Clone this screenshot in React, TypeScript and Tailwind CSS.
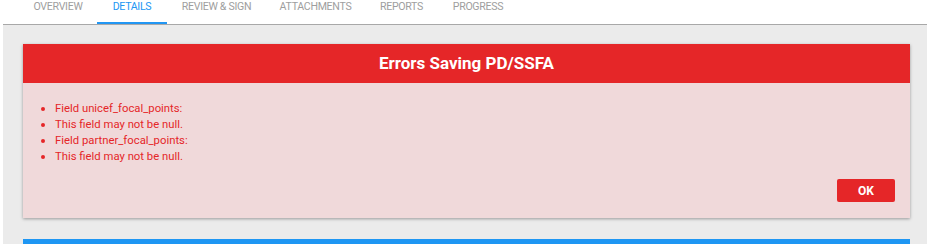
import React from 'react'

const tabs = [
  { label: 'OVERVIEW', w: 'w-[78px]' },
  { label: 'DETAILS', w: 'w-[70px]' },
  { label: 'REVIEW & SIGN', w: 'w-[99px]' },
  { label: 'ATTACHMENTS', w: 'w-[99px]' },
  { label: 'REPORTS', w: 'w-[73px]' },
  { label: 'PROGRESS', w: 'w-[80px]' },
]

const errors = [
  'Field unicef_focal_points:',
  'This field may not be null.',
  'Field partner_focal_points:',
  'This field may not be null.',
]

export default function App() {
  return (
    <div className="flex h-[244px] w-[927px] overflow-hidden bg-white font-['Roboto',sans-serif]">
      <div className="w-[3px] shrink-0 bg-white" />
      <div className="flex flex-1 flex-col bg-[#ebebeb]">
        {/* tabs */}
        <div className="flex h-[25px] shrink-0 border-b border-[#a8a8a8] bg-white pl-[16px]">
          {tabs.map((t) => (
            <div
              key={t.label}
              className={
                'relative -mt-[11px] flex h-[35px] shrink-0 items-center justify-center whitespace-nowrap text-[10.6px] tracking-[-0.3px] ' +
                t.w +
                ' ' +
                (t.label === 'DETAILS' ? 'text-[#2196f3]' : 'text-[#9e9e9e]')
              }
            >
              {t.label}
              {t.label === 'DETAILS' && <div className="absolute bottom-0 left-0 right-0 h-[2px] bg-[#2196f3]" />}
            </div>
          ))}
        </div>

        <div className="flex flex-col gap-[21px] pl-[20px] pr-[17px] pt-[19px]">
          {/* error card */}
          <div className="flex h-[174px] flex-col bg-[#f0d9da] shadow-[0_1px_3px_rgba(0,0,0,0.35)]">
            <div className="flex h-[39px] items-center justify-center bg-[#e52628] text-[17px] font-bold text-white">
              Errors Saving PD/SSFA
            </div>
            <ul className="flex flex-col pl-[18px] pt-[18px]">
              {errors.map((e, i) => (
                <li key={i} className="flex h-[16px] items-center text-[11.3px] text-[#e52628]">
                  <span className="mr-[10px] h-[4px] w-[4px] rounded-full bg-[#e52628]" />
                  {e}
                </li>
              ))}
            </ul>
            <div className="mt-auto flex justify-end pb-[16px] pr-[15px]">
              <button className="h-[23px] w-[58px] rounded-[2px] bg-[#e52628] text-[12px] font-bold text-white">
                OK
              </button>
            </div>
          </div>

          <div className="h-[10px] bg-[#1e96f3]" />
        </div>
      </div>
    </div>
  )
}
